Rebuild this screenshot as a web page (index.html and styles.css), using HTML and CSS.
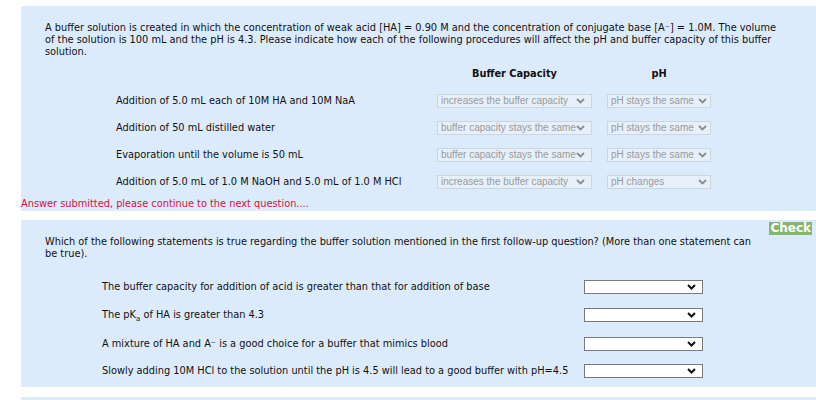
FILE: index.html
```html
<!DOCTYPE html>
<html>
<head>
<meta charset="utf-8">
<link rel="stylesheet" href="styles.css">
</head>
<body>
<div class="panel p1">
  <p class="intro">A buffer solution is created in which the concentration of weak acid [HA] = 0.90 M and the concentration of conjugate base [A⁻] = 1.0M. The volume of the solution is 100 mL and the pH is 4.3. Please indicate how each of the following procedures will affect the pH and buffer capacity of this buffer solution.</p>
  <div class="grid">
    <div></div>
    <div class="hdr">Buffer Capacity</div>
    <div class="hdr">pH</div>

    <div class="lbl">Addition of 5.0 mL each of 10M HA and 10M NaA</div>
    <div class="dsel w1"><span>increases the buffer capacity</span><svg class="chev" width="9" height="6" viewBox="0 0 9 6"><path d="M1 1 L4.5 4.5 L8 1" fill="none" stroke="#8c8c8c" stroke-width="1.8"/></svg></div>
    <div class="dsel w2"><span>pH stays the same</span><svg class="chev" width="9" height="6" viewBox="0 0 9 6"><path d="M1 1 L4.5 4.5 L8 1" fill="none" stroke="#8c8c8c" stroke-width="1.8"/></svg></div>

    <div class="lbl">Addition of 50 mL distilled water</div>
    <div class="dsel w1"><span>buffer capacity stays the same</span><svg class="chev" width="9" height="6" viewBox="0 0 9 6"><path d="M1 1 L4.5 4.5 L8 1" fill="none" stroke="#8c8c8c" stroke-width="1.8"/></svg></div>
    <div class="dsel w2"><span>pH stays the same</span><svg class="chev" width="9" height="6" viewBox="0 0 9 6"><path d="M1 1 L4.5 4.5 L8 1" fill="none" stroke="#8c8c8c" stroke-width="1.8"/></svg></div>

    <div class="lbl">Evaporation until the volume is 50 mL</div>
    <div class="dsel w1"><span>buffer capacity stays the same</span><svg class="chev" width="9" height="6" viewBox="0 0 9 6"><path d="M1 1 L4.5 4.5 L8 1" fill="none" stroke="#8c8c8c" stroke-width="1.8"/></svg></div>
    <div class="dsel w2"><span>pH stays the same</span><svg class="chev" width="9" height="6" viewBox="0 0 9 6"><path d="M1 1 L4.5 4.5 L8 1" fill="none" stroke="#8c8c8c" stroke-width="1.8"/></svg></div>

    <div class="lbl">Addition of 5.0 mL of 1.0 M NaOH and 5.0 mL of 1.0 M HCl</div>
    <div class="dsel w1"><span>increases the buffer capacity</span><svg class="chev" width="9" height="6" viewBox="0 0 9 6"><path d="M1 1 L4.5 4.5 L8 1" fill="none" stroke="#8c8c8c" stroke-width="1.8"/></svg></div>
    <div class="dsel w2"><span>pH changes</span><svg class="chev" width="9" height="6" viewBox="0 0 9 6"><path d="M1 1 L4.5 4.5 L8 1" fill="none" stroke="#8c8c8c" stroke-width="1.8"/></svg></div>
  </div>
  <div class="submitted">Answer submitted, please continue to the next question....</div>
</div>

<div class="panel p2">
  <div class="check">Check</div>
  <p class="intro q2">Which of the following statements is true regarding the buffer solution mentioned in the first follow-up question? (More than one statement can be true).</p>
  <div class="grid2">
    <div class="lbl">The buffer capacity for addition of acid is greater than that for addition of base</div>
    <div class="sel"><svg class="chev" width="9" height="6" viewBox="0 0 9 6"><path d="M1 1 L4.5 4.5 L8 1" fill="none" stroke="#111" stroke-width="2"/></svg></div>
    <div class="lbl">The pK<sub>a</sub> of HA is greater than 4.3</div>
    <div class="sel"><svg class="chev" width="9" height="6" viewBox="0 0 9 6"><path d="M1 1 L4.5 4.5 L8 1" fill="none" stroke="#111" stroke-width="2"/></svg></div>
    <div class="lbl">A mixture of HA and A⁻ is a good choice for a buffer that mimics blood</div>
    <div class="sel"><svg class="chev" width="9" height="6" viewBox="0 0 9 6"><path d="M1 1 L4.5 4.5 L8 1" fill="none" stroke="#111" stroke-width="2"/></svg></div>
    <div class="lbl">Slowly adding 10M HCl to the solution until the pH is 4.5 will lead to a good buffer with pH=4.5</div>
    <div class="sel"><svg class="chev" width="9" height="6" viewBox="0 0 9 6"><path d="M1 1 L4.5 4.5 L8 1" fill="none" stroke="#111" stroke-width="2"/></svg></div>
  </div>
</div>

<div class="panel p3"></div>
</body>
</html>
```
FILE: styles.css
```css
html, body {
  margin: 0;
  padding: 0;
  background: #fff;
}
body {
  padding: 6px 0 0 21px;
  font-family: "DejaVu Sans", Verdana, sans-serif;
  font-size: 9.8px;
  line-height: 12px;
  color: #111;
}
.panel {
  background: #dcebfc;
}
.p1 {
  padding: 16px 0 0 0;
  height: 205px;
  box-sizing: border-box;
}
.intro {
  margin: 0;
  padding: 0 35px 0 24px;
}
.intro.q2 {
  padding-right: 56px;
}
sub {
  font-size: 7px;
  line-height: 0;
  vertical-align: -3px;
}
.grid {
  display: grid;
  grid-template-columns: 306px 155px 104px;
  column-gap: 15px;
  grid-auto-rows: 27px;
  margin: 2px 0 0 95px;
  align-items: center;
}
.hdr {
  font-weight: bold;
  text-align: center;
}
.dsel {
  display: flex;
  align-items: center;
  justify-content: space-between;
  height: 14px;
  box-sizing: border-box;
  border: 1px solid #cfd4da;
  background: #e6f0fa;
  color: #9a9a9a;
  font-family: "Liberation Sans", Arial, sans-serif;
  font-size: 10px;
  padding: 0 6px 0 3px;
  white-space: nowrap;
}
.dsel.w2 { padding-right: 3px; }
.dsel .chev { flex: none; }
.submitted {
  margin-top: 3px;
  color: #d4113c;
}
.p2 {
  margin-top: 9px;
  height: 167px;
  box-sizing: border-box;
  padding-top: 16px;
  position: relative;
}
.check {
  position: absolute;
  top: 2px;
  right: 4px;
  background: #86b56d;
  color: #fff;
  font-weight: bold;
  font-size: 12px;
  line-height: 13px;
  padding: 0 1px;
}
.grid2 {
  display: grid;
  grid-template-columns: 482px 119px;
  margin: 14px 0 0 81px;
  grid-template-rows: 26px 30px 27px 27px;
  align-items: center;
}
.grid2 .lbl { white-space: nowrap; }
.sel {
  height: 14px;
  box-sizing: border-box;
  border: 1px solid #7a7a7a;
  background: #fff;
  display: flex;
  align-items: center;
  justify-content: flex-end;
  padding-right: 6px;
}
.p3 {
  margin-top: 10px;
  height: 20px;
}
```
